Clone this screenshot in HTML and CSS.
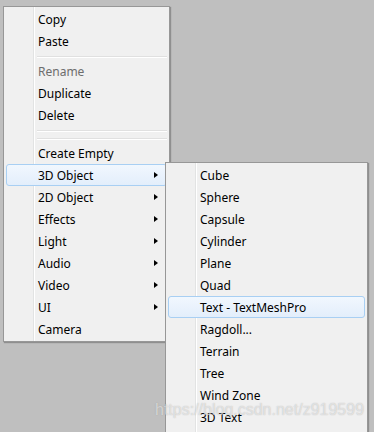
FILE: index.html
```html
<!DOCTYPE html>
<html>
<head>
<meta charset="utf-8">
<link rel="stylesheet" href="styles.css">
</head>
<body>
<div class="stage">
  <div class="menu main">
    <div class="item">Copy</div>
    <div class="item">Paste</div>
    <div class="sep"></div>
    <div class="item disabled">Rename</div>
    <div class="item">Duplicate</div>
    <div class="item">Delete</div>
    <div class="sep"></div>
    <div class="sep"></div>
    <div class="item">Create Empty</div>
    <div class="item sub active">3D Object</div>
    <div class="item sub">2D Object</div>
    <div class="item sub">Effects</div>
    <div class="item sub">Light</div>
    <div class="item sub">Audio</div>
    <div class="item sub">Video</div>
    <div class="item sub">UI</div>
    <div class="item">Camera</div>
  </div>
  <div class="menu submenu">
    <div class="item">Cube</div>
    <div class="item">Sphere</div>
    <div class="item">Capsule</div>
    <div class="item">Cylinder</div>
    <div class="item">Plane</div>
    <div class="item">Quad</div>
    <div class="item active">Text - TextMeshPro</div>
    <div class="item">Ragdoll...</div>
    <div class="item">Terrain</div>
    <div class="item">Tree</div>
    <div class="item">Wind Zone</div>
    <div class="item">3D Text</div>
  </div>
  <div class="watermark">https://blog.csdn.net/z919599</div>
</div>
</body>
</html>
```
FILE: styles.css
```css
html, body {
  margin: 0;
  padding: 0;
  height: 100%;
  overflow: hidden;
}
body {
  background: #bfbfbf;
  font-family: "Noto Sans", "Open Sans", sans-serif;
  font-size: 12px;
  color: #000;
}
.stage {
  position: relative;
  padding: 6px 0 0 3px;
}
.menu {
  background-color: #f0f0f0;
  background-image: linear-gradient(to right, transparent 29px, #e2e3e3 29px, #e2e3e3 30px, #ffffff 30px, #ffffff 31px, transparent 31px);
  border: 1px solid #979797;
  padding: 1px 2px 1px 0;
  box-shadow: 1px 1px 1px rgba(0, 0, 0, 0.25);
  box-sizing: border-box;
}
.main {
  width: 167px;
}
.submenu {
  position: absolute;
  left: 165px;
  top: 162px;
  width: 203px;
  height: 290px;
}
.item {
  position: relative;
  height: 22px;
  line-height: 18px;
  padding-top: 2px;
  white-space: nowrap;
  box-sizing: border-box;
  border: 1px solid transparent;
  margin-left: 2px;
  padding-left: 31px;
  border-radius: 3px;
}
.item.disabled {
  color: #6d6d6d;
}
.item.active {
  background: linear-gradient(to bottom, #f1f7fe, #e3eefb);
  border-color: #a8cff3;
}
.item.sub::after {
  content: "";
  position: absolute;
  right: 8px;
  top: 7px;
  width: 0;
  height: 0;
  border-top: 3.5px solid transparent;
  border-bottom: 3.5px solid transparent;
  border-left: 4px solid #000;
}
.sep {
  height: 8px;
  position: relative;
  margin-left: 31px;
}
.sep::before {
  content: "";
  position: absolute;
  left: 2px;
  right: 0;
  top: 4px;
  height: 1px;
  background: #e0e0e0;
  border-bottom: 1px solid #ffffff;
}
.watermark {
  position: absolute;
  left: 155px;
  top: 401px;
  font-family: "Liberation Sans", Arial, sans-serif;
  font-size: 16px;
  color: rgba(255, 255, 255, 0.55);
  text-shadow: 0 0 1px rgba(120, 120, 120, 0.5);
  white-space: nowrap;
}
```
